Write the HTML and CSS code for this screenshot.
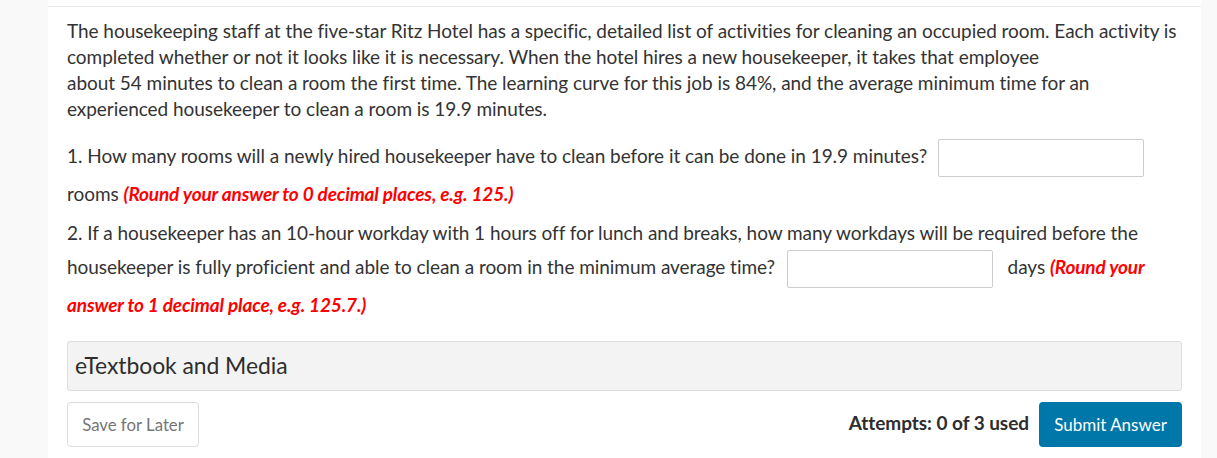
FILE: index.html
```html
<!DOCTYPE html>
<html lang="en">
<head>
<meta charset="utf-8">
<title>Question</title>
<link rel="stylesheet" href="styles.css">
</head>
<body>
<div class="page">
  <div class="gutter"></div>
  <main class="panel">
    <div class="content">
      <p class="intro">The housekeeping staff at the five-star Ritz Hotel has a specific, detailed list of activities for cleaning an occupied room. Each activity is<br>completed whether or not it looks like it is necessary. When the hotel hires a new housekeeper, it takes that employee<br>about 54 minutes to clean a room the first time. The learning curve for this job is 84%, and the average minimum time for an<br>experienced housekeeper to clean a room is 19.9 minutes.</p>
      <p class="question">1. How many rooms will a newly hired housekeeper have to clean before it can be done in 19.9 minutes? <input class="answer answer-q1" type="text" aria-label="rooms"><br>rooms <em class="hint">(Round your answer to 0 decimal places, e.g. 125.)</em></p>
      <p class="question q2">2. If a housekeeper has an 10-hour workday with 1 hours off for lunch and breaks, how many workdays will be required before the<br>housekeeper is fully proficient and able to clean a room in the minimum average time? <input class="answer answer-q2" type="text" aria-label="days"> days <em class="hint">(Round your<br>answer to 1 decimal place, e.g. 125.7.)</em></p>
      <div class="media">eTextbook and Media</div>
      <div class="actions">
        <button class="btn-save" type="button">Save for Later</button>
        <div class="submit-group">
          <span class="attempts">Attempts: 0 of 3 used</span>
          <button class="btn-submit" type="button">Submit Answer</button>
        </div>
      </div>
    </div>
  </main>
  <div class="gutter-right"></div>
</div>
</body>
</html>
```
FILE: styles.css
```css
html, body {
  margin: 0;
  padding: 0;
  background: #f9f9f9;
}
body {
  font-family: Lato, "Liberation Sans", sans-serif;
  color: #333333;
  font-size: 19px;
  line-height: 26px;
  letter-spacing: -0.05px;
}
.page {
  display: flex;
  width: 1217px;
  height: 458px;
  overflow: hidden;
}
.gutter {
  width: 48px;
  flex: none;
  background: #f9f9f9;
}
.gutter-right {
  flex: 1;
  background: #f9f9f9;
}
.panel {
  width: 1153px;
  flex: none;
  background: #ffffff;
  padding-top: 6px;
}
.content {
  border-top: 1px solid #ebebeb;
  padding: 11px 19px 0 19px;
}
.intro {
  margin: 0;
}
.question {
  margin: 17px 0 0 0;
  line-height: 34px;
}
.q2 {
  margin-top: 5px;
}
.answer {
  box-sizing: border-box;
  width: 206px;
  height: 38px;
  border: 1px solid #cccccc;
  border-radius: 2px;
  vertical-align: middle;
  margin: 0 0 0 6px;
  font: inherit;
  background: #fff;
}
.answer-q2 {
  margin: 0 10px 0 7px;
}
.hint {
  color: #ff0000;
  font-weight: 700;
  font-style: italic;
  letter-spacing: -0.15px;
}
.media {
  margin-top: 19px;
  box-sizing: border-box;
  height: 50px;
  background: #f3f3f3;
  border: 1px solid #dedede;
  border-radius: 3px;
  padding: 0 7px;
  font-size: 22.9px;
  line-height: 47px;
  color: #2d2d2d;
}
.actions {
  margin-top: 11px;
  display: flex;
  justify-content: space-between;
  align-items: center;
}
.btn-save {
  box-sizing: border-box;
  height: 45px;
  width: 132px;
  background: #ffffff;
  border: 1px solid #dcdcdc;
  border-radius: 4px;
  font-family: Lato, "Liberation Sans", sans-serif;
  font-size: 16.8px;
  color: #767676;
  padding: 0;
}
.submit-group {
  display: flex;
  align-items: center;
  gap: 10px;
}
.attempts {
  font-size: 19px;
  font-weight: 700;
  color: #2d2d2d;
  position: relative;
  top: -2px;
}
.btn-submit {
  box-sizing: border-box;
  height: 45px;
  width: 143px;
  background: #0077a9;
  border: none;
  border-radius: 4px;
  color: #ffffff;
  font-family: Lato, "Liberation Sans", sans-serif;
  font-size: 17px;
  padding: 0;
}
```
